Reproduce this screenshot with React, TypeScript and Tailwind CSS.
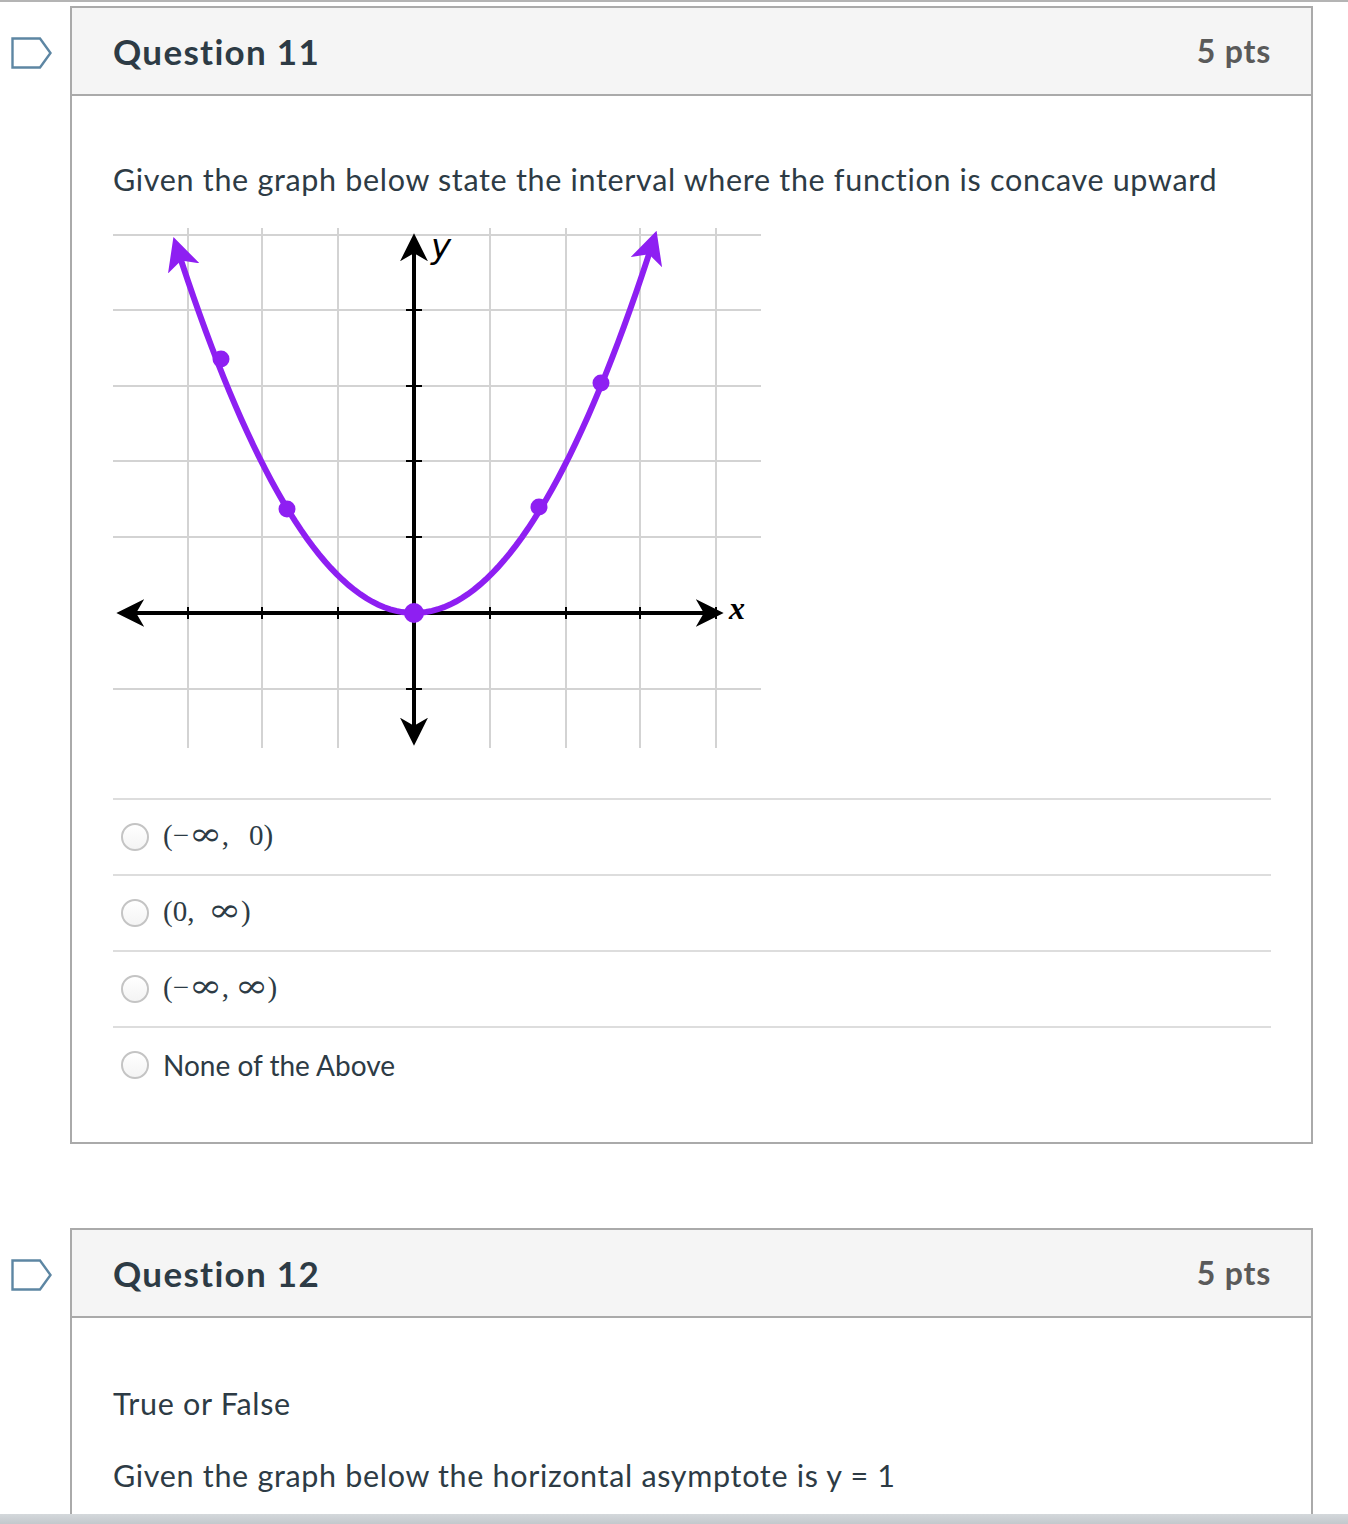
import React from 'react';

const sans = { fontFamily: 'Lato, "Noto Sans", sans-serif' };
const serif = { fontFamily: '"Liberation Serif", "Times New Roman", serif' };

const Flag: React.FC = () => (
    <svg width="42" height="32" viewBox="0 0 42 32" className="block">
        <path d="M1.5 1.5 H29 L39.5 16 L29 30.5 H1.5 Z" fill="none" stroke="#5d86a3" strokeWidth="2.4" strokeLinejoin="miter" />
    </svg>
);

const Radio: React.FC = () => (
    <span className="block w-[28px] h-[28px] rounded-full border-2 border-[#c4c4c4] bg-gradient-to-b from-white to-[#f4f4f4] shrink-0" />
);

const gridX = [75, 149, 225, 377, 453, 527, 603];
const gridY = [9, 84, 160, 235, 311, 463];
const OX = 301;
const OY = 387;
const A = 0.0065;

function parabola(from: number, to: number) {
    const pts: string[] = [];
    const n = 40;
    for (let i = 0; i <= n; i++) {
        const dx = from + ((to - from) * i) / n;
        pts.push(`${OX + dx},${OY - A * dx * dx}`);
    }
    return 'M' + pts.join(' L');
}

const Graph: React.FC = () => (
    <svg width="650" height="526" viewBox="0 0 650 526" className="block">
        <defs>
            <marker id="blk" viewBox="0 0 12 12" refX="10" refY="6" markerWidth="7" markerHeight="7" orient="auto" markerUnits="strokeWidth">
                <path d="M0 0 L12 6 L0 12 L3.5 6 Z" fill="#000" />
            </marker>
            <marker id="pur" viewBox="0 0 12 12" refX="9" refY="6" markerWidth="5.5" markerHeight="5.5" orient="auto" markerUnits="strokeWidth">
                <path d="M0 0 L12 6 L0 12 L3 6 Z" fill="#8e1ff2" />
            </marker>
        </defs>
        {gridX.map(x => (
            <line key={'v' + x} x1={x} y1={2} x2={x} y2={522} stroke="#d3d3d3" strokeWidth="2" />
        ))}
        {gridY.map(y => (
            <line key={'h' + y} x1={0} y1={y} x2={648} y2={y} stroke="#d3d3d3" strokeWidth="2" />
        ))}
        {/* axes */}
        <line x1={OX} y1={OY} x2={8} y2={OY} stroke="#000" strokeWidth="4" markerEnd="url(#blk)" />
        <line x1={OX} y1={OY} x2={606} y2={OY} stroke="#000" strokeWidth="4" markerEnd="url(#blk)" />
        <line x1={OX} y1={OY} x2={OX} y2={12} stroke="#000" strokeWidth="4" markerEnd="url(#blk)" />
        <line x1={OX} y1={OY} x2={OX} y2={515} stroke="#000" strokeWidth="4" markerEnd="url(#blk)" />
        {gridX.map(x => (
            <line key={'tx' + x} x1={x} y1={OY - 6} x2={x} y2={OY + 6} stroke="#000" strokeWidth="2" />
        ))}
        {gridY.filter(y => y > 20).map(y => (
            <line key={'ty' + y} x1={OX - 8} y1={y} x2={OX + 8} y2={y} stroke="#000" strokeWidth="2" />
        ))}
        <text x={616} y={393} fontSize="32" fontStyle="italic" fontWeight="bold" fontFamily='"Liberation Serif", serif'>x</text>
        <text x={318} y={32} fontSize="34" fontStyle="italic" fontFamily='"DejaVu Sans", sans-serif'>y</text>
        {/* curve */}
        <path d={parabola(0, -238)} fill="none" stroke="#8e1ff2" strokeWidth="6" strokeLinecap="round" markerEnd="url(#pur)" />
        <path d={parabola(0, 240)} fill="none" stroke="#8e1ff2" strokeWidth="6" strokeLinecap="round" markerEnd="url(#pur)" />
        {[[108, 133], [174, 283], [OX, OY], [426, 281], [488, 157]].map(([x, y], i) => (
            <circle key={i} cx={x} cy={y} r={i === 2 ? 10 : 8.5} fill="#8e1ff2" />
        ))}
    </svg>
);

const Header: React.FC<{ title: string; pts: string }> = ({ title, pts }) => (
    <div className="flex items-center justify-between h-[88px] bg-[#f5f5f5] border-b-2 border-[#aaaaaa] pl-[41px] pr-[40px]">
        <h2 className="text-[35px] font-bold text-[#2d3b45] tracking-[1.3px]" style={sans}>{title}</h2>
        <span className="text-[32px] font-bold text-[#5a5a5a] tracking-[0.8px]" style={sans}>{pts}</span>
    </div>
);

const Inf: React.FC = () => (
    <span className="inline-block text-[32px] leading-none scale-x-[1.25] mx-[3px]" style={{ fontFamily: '"DejaVu Serif", serif' }}>∞</span>
);

const answers: React.ReactNode[] = [
    <>(−<Inf />,<span className="inline-block w-[20px]" />0)</>,
    <>(0,<span className="inline-block w-[14px]" /><Inf />)</>,
    <>(−<Inf />,<span className="inline-block w-[6px]" /><Inf />)</>,
];

export default function App() {
    return (
        <div className="min-h-[1524px] bg-white relative overflow-hidden" style={sans}>
            <div className="h-[2px] bg-[#b4b4b4]" />
            <div className="flex mt-[4px] mr-[35px]">
                <div className="w-[70px] shrink-0 pl-[11px] pt-[31px]">
                    <Flag />
                </div>
                <div className="flex-1 border-2 border-[#aaaaaa]">
                    <Header title="Question 11" pts="5 pts" />
                    <div className="pl-[41px] pr-[40px] pt-[61px] pb-[40px]">
                        <p className="text-[30.5px] leading-[44px] tracking-[0.68px] text-[#2d3b45]">
                            Given the graph below state the interval where the function is concave upward
                        </p>
                        <div className="mt-[25px]">
                            <Graph />
                        </div>
                        <div className="mt-[46px]">
                            {answers.map((a, i) => (
                                <div key={i} className="flex items-center gap-[14px] h-[76px] pl-[8px] border-t-2 border-[#dddddd]">
                                    <Radio />
                                    <span className="text-[29px] leading-[30px] pb-[7px] text-[#2d3b45] whitespace-pre" style={serif}>{a}</span>
                                </div>
                            ))}
                            <div className="flex items-center gap-[14px] h-[76px] pl-[8px] border-t-2 border-[#dddddd]">
                                <Radio />
                                <span className="text-[28px] text-[#2d3b45]" style={sans}>None of the Above</span>
                            </div>
                        </div>
                    </div>
                </div>
            </div>
            <div className="flex mt-[84px] mr-[35px]">
                <div className="w-[70px] shrink-0 pl-[11px] pt-[31px]">
                    <Flag />
                </div>
                <div className="flex-1 border-2 border-[#aaaaaa] min-h-[320px]">
                    <Header title="Question 12" pts="5 pts" />
                    <div className="pl-[41px] pr-[40px] pt-[63px]">
                        <p className="text-[30.5px] leading-[44px] tracking-[0.68px] text-[#2d3b45]">True or False</p>
                        <p className="text-[30.5px] leading-[44px] tracking-[0.68px] text-[#2d3b45] mt-[28px]">
                            Given the graph below the horizontal asymptote is y = 1
                        </p>
                    </div>
                </div>
            </div>
            <div className="fixed left-0 right-0 bottom-0 h-[10px] bg-gradient-to-b from-[#d4d8db] to-[#c3c8cc]" />
        </div>
    );
}
